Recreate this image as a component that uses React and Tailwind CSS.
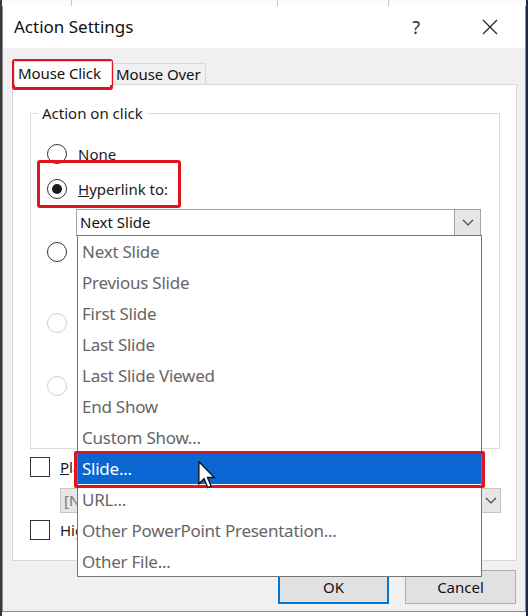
import React from 'react';

const FONT = { fontFamily: '"Noto Sans", "Open Sans", sans-serif' };

const listItems = [
  'Next Slide',
  'Previous Slide',
  'First Slide',
  'Last Slide',
  'Last Slide Viewed',
  'End Show',
  'Custom Show...',
  'Slide...',
  'URL...',
  'Other PowerPoint Presentation...',
  'Other File...',
];

const Radio = ({ checked, disabled, label }) => (
  <div className="flex items-center h-[20px]">
    <div
      className={`w-[20px] h-[20px] rounded-full border flex items-center justify-center shrink-0 ${
        disabled ? 'border-[#cfcfcf]' : 'border-[#333333]'
      }`}
    >
      {checked && <div className="w-[10px] h-[10px] rounded-full bg-[#1a1a1a]" />}
    </div>
    {label && (
      <span className={`ml-[11px] text-[15px] ${disabled ? 'text-[#a0a0a0]' : 'text-[#1a1a1a]'}`}>
        {label}
      </span>
    )}
  </div>
);

const Chevron = () => (
  <svg width="12" height="7" viewBox="0 0 12 7" fill="none">
    <path d="M1 1 L6 6 L11 1" stroke="#444" strokeWidth="1.2" />
  </svg>
);

export default function App() {
  return (
    <div className="relative w-[528px] h-[616px] overflow-hidden bg-white" style={FONT}>
      {/* app behind the dialog */}
      <div className="absolute inset-x-0 top-0 h-[6px] bg-[#fbfbfb]">
        <div className="absolute left-[71px] top-0 h-full w-px bg-[#c8c8c8]" />
        <div className="absolute left-[277px] top-0 h-full w-px bg-[#c8c8c8]" />
        <div className="absolute left-[388px] top-0 h-full w-px bg-[#c8c8c8]" />
      </div>
      <div className="absolute left-0 top-0 bottom-0 w-[2px] bg-[#3a3a3a]" />
      <div className="absolute right-0 top-0 bottom-0 w-[2px] bg-[#1d2a44]" />

      {/* dialog */}
      <div className="ml-[2px] mt-[5px] w-[524px] h-[607px] border border-[#8a8a8a] flex flex-col bg-[#f0f0f0]">
        {/* title bar */}
        <div className="h-[42px] bg-white flex items-center pl-[11px] shrink-0">
          <span className="text-[17px] text-[#111] flex-1">Action Settings</span>
          <span className="text-[18px] text-[#333] mr-[62px]">?</span>
          <svg width="16" height="16" viewBox="0 0 16 16" className="mr-[27px]">
            <path d="M1 1 L15 15 M15 1 L1 15" stroke="#222" strokeWidth="1.2" />
          </svg>
        </div>

        {/* body */}
        <div className="flex-1 flex flex-col px-[9px]">
          {/* tabs */}
          <div className="flex items-end h-[36px] pl-[2px]">
            <div className="h-[24px] w-[98px] bg-white border border-b-0 border-[#d9d9d9] flex items-center pl-[3px] text-[15px] tracking-[-0.1px] text-[#111] relative z-10 -mb-px">
              Mouse Click
            </div>
            <div className="h-[21px] w-[93px] ml-[1px] bg-[#f0f0f0] border border-b-0 border-[#d9d9d9] flex items-center pl-[2px] text-[15px] tracking-[-0.1px] text-[#111]">
              Mouse Over
            </div>
          </div>

          {/* tab panel */}
          <div className="h-[477px] w-[505px] bg-white border border-[#d9d9d9] pl-[17px]">
            {/* group box */}
            <div className="relative mt-[28px] w-[470px] h-[336px] border border-[#dcdcdc] pl-[16px] pt-[30px]">
              <span className="absolute -top-[11px] left-[7px] bg-white px-[4px] text-[15px] text-[#1a1a1a] leading-[20px]">
                Action on click
              </span>
              <Radio label="None" />
              <div className="mt-[15px]">
                <Radio checked label={<><span className="underline">H</span>yperlink to:</>} />
              </div>
              <div className="mt-[10px] ml-[29px] w-[405px] h-[27px] border border-[#a6a6a6] flex items-center">
                <span className="flex-1 pl-[3px] text-[15px] text-[#111]">Next Slide</span>
                <div className="w-[26px] h-full bg-[#e5e5e5] border-l border-[#a6a6a6] flex items-center justify-center">
                  <Chevron />
                </div>
              </div>
              <div className="mt-[6px]">
                <Radio />
              </div>
              <div className="mt-[51px]">
                <Radio disabled />
              </div>
              <div className="mt-[43px]">
                <Radio disabled />
              </div>
            </div>

            {/* lower options */}
            <div className="mt-[8px] flex items-center h-[20px]">
              <div className="w-[20px] h-[20px] border border-[#333] bg-white shrink-0" />
              <span className="ml-[10px] text-[15px] text-[#1a1a1a]">
                <span className="underline">P</span>lay sound:
              </span>
            </div>
            <div className="mt-[11px] ml-[30px] w-[441px] h-[25px] bg-[#e6e6e6] border border-[#c4c4c4] flex items-center">
              <span className="flex-1 pl-[3px] text-[15px] text-[#7a7a7a]">[No Sound]</span>
              <div className="w-[18px] h-full flex items-center justify-center">
                <Chevron />
              </div>
            </div>
            <div className="mt-[7px] flex items-center h-[20px]">
              <div className="w-[20px] h-[20px] border border-[#333] bg-white shrink-0" />
              <span className="ml-[10px] text-[15px] text-[#1a1a1a]">
                Highlight <span className="underline">c</span>lick
              </span>
            </div>
          </div>

          {/* buttons */}
          <div className="flex justify-end gap-[16px] mt-[9px]">
            <button className="w-[111px] h-[34px] bg-[#e1e1e1] border-2 border-[#0078d7] text-[15px] text-[#111]">
              OK
            </button>
            <button className="w-[111px] h-[34px] bg-[#e1e1e1] border border-[#adadad] text-[15px] text-[#111]">
              Cancel
            </button>
          </div>
        </div>
      </div>

      {/* dropdown list popup */}
      <div className="absolute left-[77px] top-[235px] w-[405px] h-[342px] bg-white border border-[#767676] flex flex-col">
        {listItems.map((item) => (
          <div
            key={item}
            className={`h-[31px] shrink-0 flex items-center pl-[4px] text-[17px] tracking-[-0.25px] ${
              item === 'Slide...' ? 'bg-[#0a66d2] text-white' : 'text-[#666666]'
            }`}
          >
            {item}
          </div>
        ))}
      </div>

      {/* red annotation boxes */}
      <div className="absolute left-[12px] top-[59px] w-[101px] h-[31px] border-[3px] border-[#e0141e] rounded-[3px]" />
      <div className="absolute left-[37px] top-[160px] w-[144px] h-[48px] border-[3px] border-[#e0141e] rounded-[3px]" />
      <div className="absolute left-[74px] top-[451px] w-[411px] h-[37px] border-[3px] border-[#e0141e] rounded-[2px]" />

      {/* mouse cursor */}
      <svg className="absolute left-[198px] top-[461px]" width="18" height="28" viewBox="0 0 12 19">
        <path d="M0.5 0.5 L0.5 15.5 L4 12 L6.5 18 L8.8 17 L6.3 11.2 L11 11.2 Z" fill="white" stroke="#111" strokeWidth="0.9" />
      </svg>
    </div>
  );
}
